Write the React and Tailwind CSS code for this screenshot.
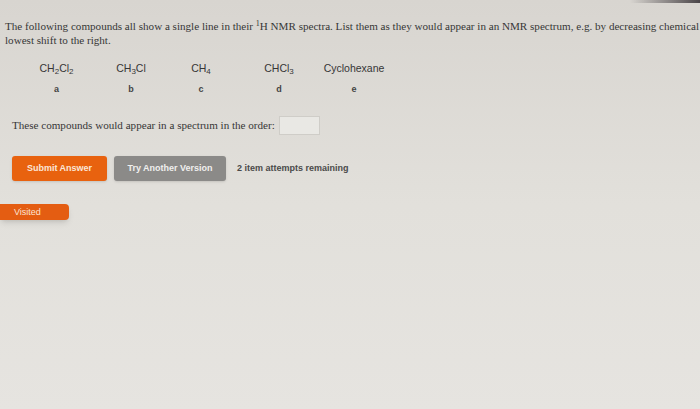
import React from 'react';

const COMPOUNDS = [
  { w: 'w-[73px]', label: <>CH<sub className="text-[8px]">2</sub>Cl<sub className="text-[8px]">2</sub></>, letter: 'a' },
  { w: 'w-[76px]', label: <>CH<sub className="text-[8px]">3</sub>Cl</>, letter: 'b' },
  { w: 'w-[64px]', label: <>CH<sub className="text-[8px]">4</sub></>, letter: 'c' },
  { w: 'w-[92px]', label: <>CHCl<sub className="text-[8px]">3</sub></>, letter: 'd' },
  { w: 'w-[58px]', label: <>Cyclohexane</>, letter: 'e' },
];

export default function App() {
  return (
    <div className="relative w-[700px] h-[409px] overflow-hidden bg-linear-to-b from-[#d8d5d0] via-[#e2e0db] to-[#e6e4e0] text-[#363636]">
      {/* dark edge of the monitor at top right */}
      <div className="absolute right-0 top-0 w-[70px] h-[3px] bg-linear-to-r from-transparent to-[#4a4548]" />

      <div className="pt-[19px] pl-[5px] font-['Liberation_Serif',serif] text-[11.1px] leading-[14px]">
        <p className="whitespace-nowrap">
          The following compounds all show a single line in their <sup className="text-[8px]">1</sup>H NMR spectra. List them as they would appear in an NMR spectrum, e.g. by decreasing chemical
        </p>
        <p>lowest shift to the right.</p>
      </div>

      {/* compounds */}
      <div className="flex pl-[20px] pt-[14px] font-['Liberation_Sans',sans-serif] text-[10.5px]">
        {COMPOUNDS.map(c => (
          <div key={c.letter} className={`${c.w} flex flex-col items-center`}>
            <div className="h-[14px] leading-[14px] whitespace-nowrap">{c.label}</div>
            <div className="mt-[9px] h-[11px] leading-[11px] font-bold text-[9px] text-[#444]">{c.letter}</div>
          </div>
        ))}
      </div>

      {/* order */}
      <div className="flex items-center pl-[12px] pt-[21px] font-['Liberation_Serif',serif] text-[11.1px]">
        <span>These compounds would appear in a spectrum in the order:</span>
        <div className="ml-[4px] w-[41px] h-[19px] bg-[#e9e8e4] border border-[#cfcdc8]" />
      </div>

      {/* buttons */}
      <div className="flex items-center pl-[12px] pt-[21px] font-['Liberation_Sans',sans-serif] text-[9px] font-bold">
        <button className="w-[95px] h-[25px] rounded-[3px] bg-[#e8620f] text-[#fbe6d8] shadow-sm">Submit Answer</button>
        <button className="ml-[7px] w-[112px] h-[25px] rounded-[3px] bg-[#8b8a88] text-[#f0efee] shadow-sm">Try Another Version</button>
        <span className="ml-[11px] text-[#4a4a4a]">2 item attempts remaining</span>
      </div>

      <div className="pt-[23px] font-['Liberation_Sans',sans-serif] text-[9px]">
        <div className="w-[69px] h-[16px] rounded-r-[4px] bg-[#e45d12] text-[#fbe3d2] pl-[14px] leading-[16px] shadow-md">Visited</div>
      </div>
    </div>
  );
}
